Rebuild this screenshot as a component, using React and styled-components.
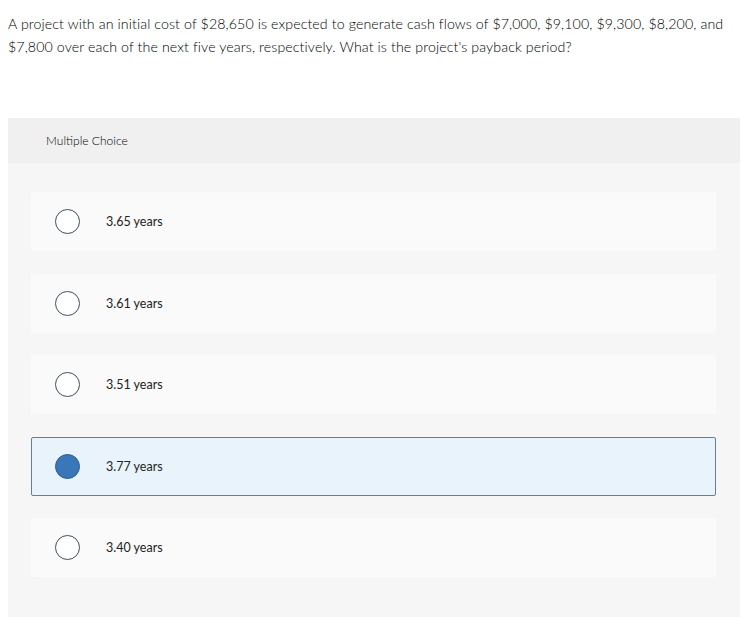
import React from "react";
import styled, { createGlobalStyle } from "styled-components";

const Global = createGlobalStyle`
  html, body { margin: 0; padding: 0; background: #ffffff; }
  body { font-family: "Lato", "Open Sans", sans-serif; color: #222; }
`;

const Page = styled.div`
  padding: 8px 3px 0 8px;
`;

const Question = styled.p`
  margin: 0;
  padding-top: 4px;
  font-size: 14.2px;
  font-weight: 300;
  line-height: 23px;
  color: #000000;
  letter-spacing: 0.1px;
`;

const Panel = styled.section`
  margin-top: 60px;
  background: #f6f6f6;
  min-height: 500px;
`;

const Header = styled.div`
  height: 45px;
  background: #f0f0f0;
  display: flex;
  align-items: center;
  padding-left: 38px;
  font-size: 12px;
  font-weight: 300;
  color: #000000;
`;

const List = styled.div`
  display: flex;
  flex-direction: column;
  gap: 22.5px;
  padding: 29px 24px 0 23px;
`;

const Option = styled.div`
  height: 59px;
  box-sizing: border-box;
  display: flex;
  align-items: center;
  padding-left: 23px;
  gap: 26px;
  background: ${(p) => (p.$selected ? "#e9f3fc" : "#fafafa")};
  border: 1px solid ${(p) => (p.$selected ? "#62809c" : "transparent")};
  border-radius: 2px;
  font-size: 12.5px;
  font-weight: 400;
  color: #222;
`;

const Radio = styled.span`
  width: 25px;
  height: 25px;
  box-sizing: border-box;
  border-radius: 50%;
  border: 1px solid ${(p) => (p.$selected ? "#2c5d8c" : "#3d4f5c")};
  background: ${(p) => (p.$selected ? "#3a77b8" : "#ffffff")};
  flex: none;
`;

const options = [
  "3.65 years",
  "3.61 years",
  "3.51 years",
  "3.77 years",
  "3.40 years",
];

export default function App() {
  return (
    <Page>
      <Global />
      <Question>
        A project with an initial cost of $28,650 is expected to generate cash flows of $7,000, $9,100, $9,300, $8,200, and $7,800 over each of the next five years, respectively. What is the project's payback period?
      </Question>
      <Panel>
        <Header>Multiple Choice</Header>
        <List>
          {options.map((o, i) => (
            <Option key={o} $selected={i === 3}>
              <Radio $selected={i === 3} />
              <span>{o}</span>
            </Option>
          ))}
        </List>
      </Panel>
    </Page>
  );
}
